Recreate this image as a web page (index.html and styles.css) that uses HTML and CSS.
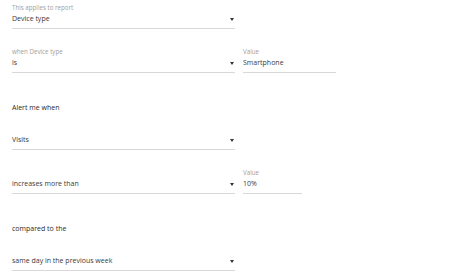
FILE: index.html
```html
<!DOCTYPE html>
<html>
<head>
    <meta charset="utf-8">
    <meta name="viewport" content="width=device-width, initial-scale=1.0">
    <title>Alert</title>
    <link rel="stylesheet" href="styles.css">
</head>
<body>
    <div class="form">
        <div class="field">
            <label>This applies to report</label>
            <div class="select">Device type<span class="caret"></span></div>
        </div>

        <div class="row">
            <div class="field">
                <label>when Device type</label>
                <div class="select">is<span class="caret"></span></div>
            </div>
            <div class="field value">
                <label>Value</label>
                <div class="input">Smartphone</div>
            </div>
        </div>

        <p class="heading">Alert me when</p>

        <div class="field">
            <div class="select">Visits<span class="caret"></span></div>
        </div>

        <div class="row">
            <div class="field">
                <label>&nbsp;</label>
                <div class="select">increases more than<span class="caret"></span></div>
            </div>
            <div class="field value short">
                <label>Value</label>
                <div class="input">10%</div>
            </div>
        </div>

        <p class="heading">compared to the</p>

        <div class="field">
            <div class="select">same day in the previous week<span class="caret"></span></div>
        </div>
    </div>
</body>
</html>
```

FILE: styles.css
```css
body {
    margin: 0;
    background: #fff;
    font-family: "Open Sans", "Noto Sans", sans-serif;
    color: #3a3a3a;
}
.form {
    padding: 4px 12px 0 12px;
}
.row {
    display: flex;
    align-items: flex-end;
    gap: 8px;
    margin-top: 19px;
}
.field {
    width: 223px;
    margin-top: 19px;
}
.form > .field:first-child {
    margin-top: 0;
}
.row .field {
    margin-top: 0;
}
.field.value {
    width: 93px;
}
.field.value.short {
    width: 59px;
}
label {
    display: block;
    font-size: 6.2px;
    line-height: 7px;
    color: #a0a0a0;
    white-space: nowrap;
}
.select, .input {
    position: relative;
    font-size: 7px;
    line-height: 10px;
    padding: 3px 0 4px 0;
    border-bottom: 1px solid #d8d8d8;
    white-space: nowrap;
}
.caret {
    position: absolute;
    right: 1px;
    top: 7px;
    width: 0;
    height: 0;
    border-left: 2px solid transparent;
    border-right: 2px solid transparent;
    border-top: 3px solid #333;
}
.heading {
    margin: 30px 0 0 0;
    font-size: 7px;
    line-height: 10px;
    color: #2a2a2a;
}
```
